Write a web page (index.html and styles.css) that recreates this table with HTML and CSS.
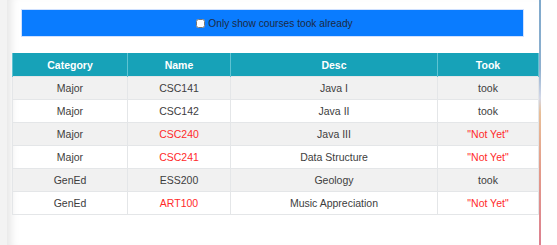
FILE: index.html
```html
<!DOCTYPE html>
<html>
<head>
<meta charset="utf-8">
<link rel="stylesheet" href="styles.css">
</head>
<body>
<div class="strip"></div>
<div class="panel">
  <div class="filter">
    <label class="filter-label"><input type="checkbox" class="cb"> Only show courses took already</label>
  </div>
  <table class="courses">
    <thead>
      <tr><th class="c1">Category</th><th class="c2">Name</th><th class="c3">Desc</th><th class="c4">Took</th></tr>
    </thead>
    <tbody>
      <tr><td>Major</td><td>CSC141</td><td>Java I</td><td>took</td></tr>
      <tr><td>Major</td><td>CSC142</td><td>Java II</td><td>took</td></tr>
      <tr><td>Major</td><td class="red">CSC240</td><td>Java III</td><td class="red">"Not Yet"</td></tr>
      <tr><td>Major</td><td class="red">CSC241</td><td>Data Structure</td><td class="red">"Not Yet"</td></tr>
      <tr><td>GenEd</td><td>ESS200</td><td>Geology</td><td>took</td></tr>
      <tr><td>GenEd</td><td class="red">ART100</td><td>Music Appreciation</td><td class="red">"Not Yet"</td></tr>
    </tbody>
  </table>
</div>
<div class="rline"></div>
</body>
</html>
```

FILE: styles.css
```css
html, body {
  margin: 0;
  padding: 0;
  height: 245px;
  background: #ffffff;
  overflow: hidden;
}
body {
  display: flex;
  font-family: "Liberation Sans", Arial, sans-serif;
  color: #3d3d3d;
}
.strip {
  width: 7px;
  flex: none;
  background: #f3f3f3;
}
.panel {
  width: 532px;
  flex: none;
  background: #ffffff;
  box-shadow: inset 10px 0 8px -6px rgba(0,0,0,0.10);
  padding-top: 10px;
  box-sizing: border-box;
}
.filter {
  margin-left: 15px;
  width: 501px;
  height: 26px;
  background: #0a7cff;
  display: flex;
  align-items: center;
  justify-content: center;
  box-shadow: 0 0 0 1px rgba(120,170,255,0.35);
}
.filter-label {
  font-size: 10.2px;
  color: #1c2a44;
  display: flex;
  align-items: center;
  margin-left: 4px;
}
.cb {
  width: 9px;
  height: 9px;
  margin: 0 3px 0 0;
}
.courses {
  margin-top: 17px;
  margin-left: 5px;
  width: 527px;
  border-collapse: collapse;
  font-size: 10.5px;
  table-layout: fixed;
}
.courses th {
  background: #17a2b8;
  color: #ffffff;
  font-weight: bold;
  height: 23px;
  padding: 0;
  border-left: 1px solid #5fc3d2;
  border-right: 1px solid #5fc3d2;
}
.courses td {
  height: 22px;
  padding: 0;
  text-align: center;
  border: 1px solid #e4e6e8;
}
.courses tbody tr:nth-child(odd) td {
  background: #f1f1f1;
}
.c1 { width: 114px; }
.c2 { width: 102px; }
.c3 { width: 206px; }
.red { color: #ff2a2a; }
.rline {
  width: 2px;
  flex: none;
  height: 245px;
  background: linear-gradient(#7fa9cc 0%, #8eb0cf 28%, #d4d8e8 40%, #e8bf98 46%, #e39a8a 70%, #dc8090 100%);
}
```
